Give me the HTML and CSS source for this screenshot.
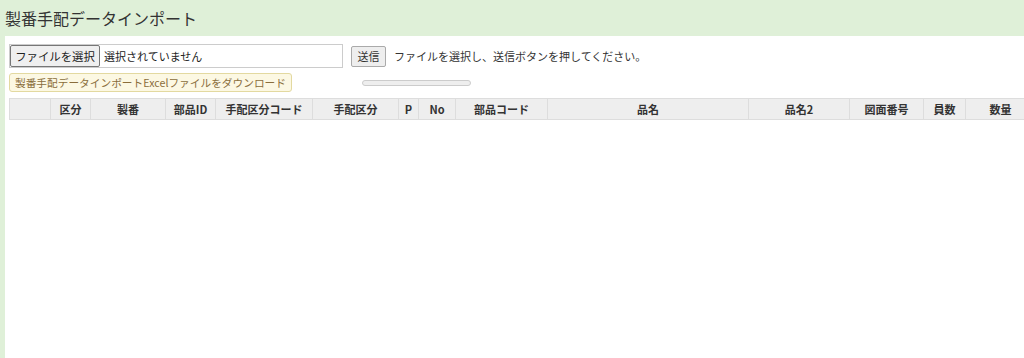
FILE: index.html
```html
<!DOCTYPE html>
<html lang="ja">
<head>
    <meta charset="UTF-8">
    <meta name="viewport" content="width=device-width, initial-scale=1.0">
    <title>製番手配データインポート</title>
    <link rel="stylesheet" href="styles.css">
</head>
<body>
    <div class="header">製番手配データインポート</div>
    <div class="panel">
        <div class="upload-row">
            <div class="file-box">
                <span class="file-button">ファイルを選択</span>
                <span class="file-name">選択されていません</span>
            </div>
            <span class="send-button">送信</span>
            <span class="hint">ファイルを選択し、送信ボタンを押してください。</span>
        </div>
        <div class="download-row">
            <span class="download-button">製番手配データインポートExcelファイルをダウンロード</span>
            <div class="progress"></div>
        </div>
        <table class="grid">
            <colgroup>
                <col style="width:41px">
                <col style="width:40px">
                <col style="width:75px">
                <col style="width:50px">
                <col style="width:97px">
                <col style="width:86px">
                <col style="width:20px">
                <col style="width:37px">
                <col style="width:92px">
                <col style="width:201px">
                <col style="width:101px">
                <col style="width:74px">
                <col style="width:42px">
                <col style="width:70px">
            </colgroup>
            <thead>
                <tr>
                    <th></th>
                    <th>区分</th>
                    <th>製番</th>
                    <th>部品ID</th>
                    <th>手配区分コード</th>
                    <th>手配区分</th>
                    <th>P</th>
                    <th>No</th>
                    <th>部品コード</th>
                    <th>品名</th>
                    <th>品名2</th>
                    <th>図面番号</th>
                    <th>員数</th>
                    <th>数量</th>
                </tr>
            </thead>
        </table>
    </div>
</body>
</html>
```

FILE: styles.css
```css
html, body {
    height: 100%;
}

body {
    margin: 0;
    background-color: #dff0d8;
    font-family: "Noto Sans CJK JP", "Noto Sans", sans-serif;
    color: #333;
    display: flex;
    flex-direction: column;
    overflow: hidden;
}

.header {
    height: 36px;
    line-height: 36px;
    padding-left: 5px;
    font-size: 16px;
    box-sizing: border-box;
}

.panel {
    flex: 1;
    margin-left: 5px;
    background: #ffffff;
    padding: 8px 0 0 4px;
    overflow: hidden;
}

.upload-row {
    display: flex;
    align-items: center;
    height: 24px;
    font-size: 11px;
}

.file-box {
    display: flex;
    align-items: center;
    width: 334px;
    height: 24px;
    box-sizing: border-box;
    border: 1px solid #ccc;
}

.file-button {
    width: 90px;
    height: 22px;
    line-height: 20px;
    box-sizing: border-box;
    border: 1px solid #767676;
    border-radius: 2px;
    background: #efefef;
    color: #222;
    font-size: 11.4px;
    text-align: center;
}

.file-name {
    margin-left: 4px;
    color: #222;
}

.send-button {
    margin-left: 8px;
    width: 35px;
    height: 21px;
    line-height: 19px;
    box-sizing: border-box;
    border: 1px solid #aaa;
    border-radius: 2px;
    background: #eee;
    color: #333;
    text-align: center;
}

.hint {
    margin-left: 8px;
    color: #333;
}

.download-row {
    display: flex;
    align-items: center;
    margin-top: 5px;
}

.download-button {
    width: 283px;
    height: 19px;
    line-height: 17px;
    box-sizing: border-box;
    border: 1px solid #e3d9a0;
    border-radius: 3px;
    background: #fcf8e3;
    color: #8a6d3b;
    font-size: 10.7px;
    text-align: center;
    white-space: nowrap;
}

.progress {
    margin-left: 70px;
    width: 109px;
    height: 6px;
    box-sizing: border-box;
    border: 1px solid #ccc;
    border-radius: 3px;
    background: #eee;
}

.grid {
    margin-top: 6px;
    border-collapse: collapse;
    table-layout: fixed;
    width: 1026px;
}

.grid th {
    height: 20px;
    padding: 0;
    border: 1px solid #ddd;
    background: #eeeeee;
    font-size: 11px;
    font-weight: bold;
    color: #333;
    text-align: center;
    white-space: nowrap;
    overflow: hidden;
}
```
